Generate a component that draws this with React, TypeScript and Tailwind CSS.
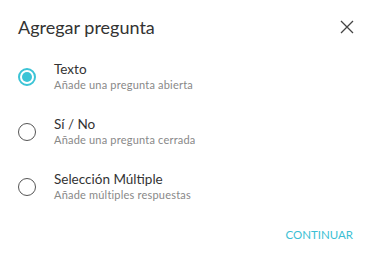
import { useState } from "react";

const options = [
    { title: "Texto", desc: "Añade una pregunta abierta" },
    { title: "Sí / No", desc: "Añade una pregunta cerrada" },
    { title: "Selección Múltiple", desc: "Añade múltiples respuestas" },
];

const App = () => {
    const [selected, setSelected] = useState(0);

    return (
        <div className="w-[372px] h-[257px] bg-white font-['Lato','Open_Sans',sans-serif] text-[#333]">
            <div className="flex items-center justify-between pl-[18px] pr-[16px] pt-[14px]">
                <h2 className="text-[18px] leading-[26px] text-[#333]">Agregar pregunta</h2>
                <button className="w-[18px] h-[18px] flex items-center justify-center text-[#444]">
                    <svg width="14" height="14" viewBox="0 0 14 14" fill="none" stroke="currentColor" strokeWidth="1.3">
                        <path d="M1 1L13 13M13 1L1 13" />
                    </svg>
                </button>
            </div>

            <div className="flex flex-col gap-[24px] pt-[21px] pl-[18px]">
                {options.map((opt, i) => (
                    <label key={opt.title} className="flex items-center gap-[18px] cursor-pointer" onClick={() => setSelected(i)}>
                        <span
                            className={
                                i === selected
                                    ? "w-[18px] h-[18px] rounded-full border-2 border-[#3cc4d6] flex items-center justify-center"
                                    : "w-[18px] h-[18px] rounded-full border border-[#555] flex items-center justify-center"
                            }
                        >
                            {i === selected && <span className="w-[10px] h-[10px] rounded-full bg-[#3cc4d6]" />}
                        </span>
                        <span className="flex flex-col">
                            <span className="text-[13.5px] leading-[16px] text-[#333]">{opt.title}</span>
                            <span className="text-[11px] leading-[15px] text-[#888] tracking-[0.2px]">{opt.desc}</span>
                        </span>
                    </label>
                ))}
            </div>

            <div className="flex justify-end pr-[19px] pt-[24px]">
                <button className="text-[11.5px] text-[#3bbfd4]">CONTINUAR</button>
            </div>
        </div>
    );
};

export default App;
